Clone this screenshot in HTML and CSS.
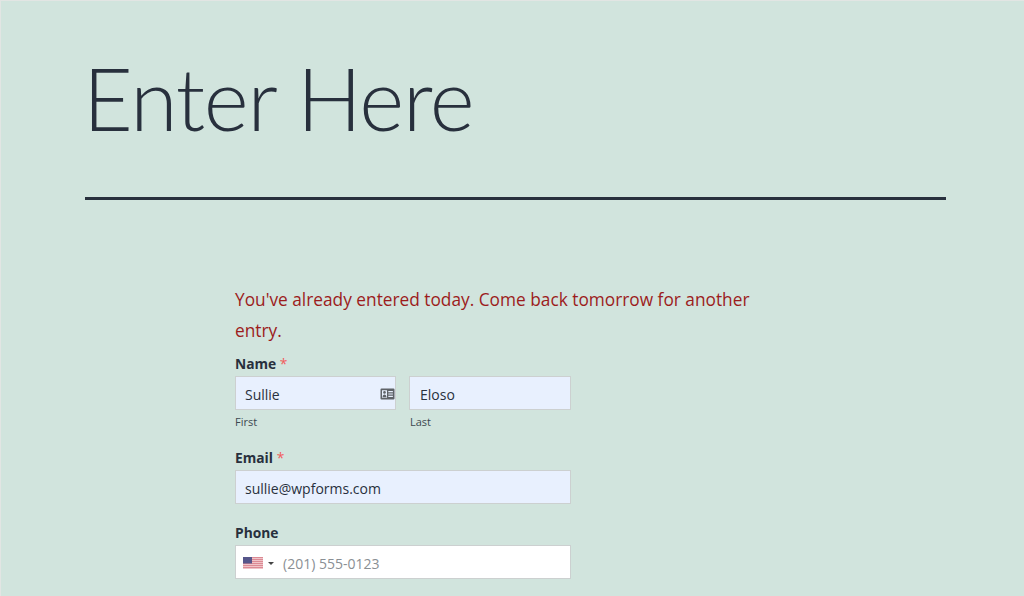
FILE: index.html
```html
<!DOCTYPE html>
<html>
<head>
	<title>Enter Here</title>
	<meta charset="utf-8">
	<link rel="stylesheet" href="styles.css">
</head>
<body>
	<header class="page-header">
		<h1>Enter Here</h1>
	</header>
	<main class="content">
		<p class="notice">You've already entered today. Come back tomorrow for another entry.</p>
		<form class="entry-form">
			<div class="field">
				<label class="field-label">Name <span class="required">*</span></label>
				<div class="name-row">
					<div class="name-col first">
						<div class="input has-card">
							<span>Sullie</span>
							<svg class="card-icon" width="15" height="12" viewBox="0 0 15 12"><path fill="#5f6368" fill-rule="evenodd" d="M1.500 .5h12a1 1 0 0 1 1 1v9a1 1 0 0 1-1 1h-12a1 1 0 0 1-1-1v-9a1 1 0 0 1 1-1zM2 2.200v7.600h5V2.200zM8.300 3v1.300h4.600V3zM8.300 5.400v1.200h4.600V5.400zM8.300 7.700V9h4.600V7.700z"/><circle cx="4.500" cy="4.400" r="1.300" fill="#5f6368"/><path fill="#5f6368" d="M2.600 9.200c0-1.600.8-2.700 1.900-2.700s1.900 1.100 1.900 2.700z"/></svg>
						</div>
						<small class="sublabel">First</small>
					</div>
					<div class="name-col last">
						<div class="input">Eloso</div>
						<small class="sublabel">Last</small>
					</div>
				</div>
			</div>
			<div class="field">
				<label class="field-label">Email <span class="required">*</span></label>
				<div class="input">sullie@wpforms.com</div>
			</div>
			<div class="field">
				<label class="field-label">Phone</label>
				<div class="input phone">
					<svg class="flag" width="20" height="12" viewBox="0 0 20 12">
						<rect width="20" height="12" fill="#f0c4c8"/>
						<path stroke="#dc8a94" stroke-width="1" d="M0 .5h20M0 2.500h20M0 4.500h20M0 6.500h20M0 8.500h20M0 10.500h20"/>
						<rect width="9" height="6.500" fill="#56568a"/>
					</svg>
					<span class="caret"></span>
					<span class="placeholder">(201) 555-0123</span>
				</div>
			</div>
		</form>
	</main>
</body>
</html>
```

FILE: styles.css
```css
html, body {
	height: 100%;
}

body {
	margin: 0;
	box-sizing: border-box;
	height: 596px;
	overflow: hidden;
	background: #d1e4dd;
	border-top: 1px solid #e2e5e3;
	border-left: 1px solid #e2e5e3;
	color: #28303d;
	font-family: "Open Sans", "Noto Sans", sans-serif;
}

.page-header {
	margin: 0 78px 0 84px;
	height: 196px;
	border-bottom: 3px solid #28303d;
}

h1 {
	margin: 0 0 0 -2px;
	padding: 40px 0 0;
	font-family: Lato, "Open Sans", sans-serif;
	font-size: 86px;
	font-weight: 300;
	line-height: 114px;
	letter-spacing: -1.2px;
}

.content {
	padding: 84px 0 0 234px;
}

.notice {
	width: 530px;
	margin: 0 0 7px;
	color: #9c1c1c;
	font-size: 17.3px;
	line-height: 31px;
}

.entry-form {
	width: 336px;
}

.field {
	margin-bottom: 18px;
}

.field-label {
	display: block;
	height: 23px;
	font-size: 13.8px;
	font-weight: 700;
	line-height: 22px;
}

.required {
	color: #f25c5c;
	font-weight: 400;
}

.name-row {
	display: flex;
	gap: 13px;
}

.name-col {
	flex: 1;
}

.name-col.first {
	flex: 0 0 161px;
}

.name-col.last .input {
	padding-left: 10px;
}

.name-col.last .sublabel {
	margin-left: 1px;
}

.input {
	position: relative;
	display: flex;
	align-items: center;
	box-sizing: border-box;
	height: 34px;
	padding: 2px 9px 0;
	background: #e8f0fe;
	border: 1px solid #ccd0d0;
	font-size: 14px;
}

.card-icon {
	position: absolute;
	top: 11px;
	right: 0;
}

.sublabel {
	display: block;
	margin-top: 4px;
	height: 15px;
	color: #3d4850;
	font-size: 11px;
	line-height: 16px;
}

.phone {
	padding-left: 7px;
	background: #fff;
}

.caret {
	margin: 0 0 0 5px;
	border-left: 3px solid transparent;
	border-right: 3px solid transparent;
	border-top: 3px solid #444;
}

.placeholder {
	margin-left: 9px;
	color: #8a8f94;
}
```
